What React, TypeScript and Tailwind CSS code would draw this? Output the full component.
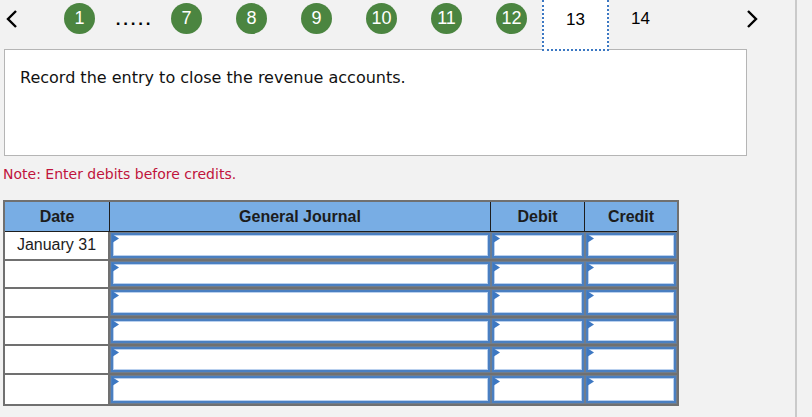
import React from "react";

function Chevron({ dir }: { dir: "left" | "right" }) {
  return (
    <svg width="14" height="20" viewBox="0 0 14 20" fill="none">
      {dir === "left" ? (
        <polyline points="11,2 3,10 11,18" stroke="#000" strokeWidth="2.4" strokeLinecap="butt" strokeLinejoin="miter" />
      ) : (
        <polyline points="3,2 11,10 3,18" stroke="#000" strokeWidth="2.4" strokeLinecap="butt" strokeLinejoin="miter" />
      )}
    </svg>
  );
}

function Circle({ n }: { n: number }) {
  return (
    <div className="w-[65px] h-[49px] flex justify-center pt-[3px]">
      <div className="w-[31px] h-[31px] rounded-full bg-[#4b8540] text-white flex items-center justify-center text-[18px] font-['Liberation_Sans',Arial,sans-serif]">
        {n}
      </div>
    </div>
  );
}

function InputCell() {
  return (
    <div className="relative h-full w-full p-[1px]">
      <div className="h-full w-full bg-white border-2 border-[#4a7fc1] shadow-[inset_0_0_0_1px_#b9d0ee]" />
      <svg className="absolute left-[2px] top-[2px]" width="7" height="9" viewBox="0 0 7 9">
        <polygon points="0,0 7,4.5 0,9" fill="#3d78c2" />
      </svg>
    </div>
  );
}

export default function App() {
  const rows = [0, 1, 2, 3, 4, 5];
  return (
    <div className="w-[812px] h-[417px] bg-[#f2f2f2] flex overflow-hidden font-['Liberation_Sans',Arial,sans-serif]">
      <div className="w-[795px] flex flex-col">
        {/* nav */}
        <div className="h-[49px] flex items-start relative z-10">
          <div className="w-[47px] h-[37px] flex items-center pl-[5px]">
            <Chevron dir="left" />
          </div>
          <Circle n={1} />
          <div className="w-[42px] h-[37px] flex items-center justify-center">
            <span className="text-[17px] font-bold tracking-[2.8px] text-black leading-none pt-[2px] pl-[3px]">.....</span>
          </div>
          {[7, 8, 9, 10, 11, 12].map((n) => (
            <Circle key={n} n={n} />
          ))}
          <div className="w-[67px] h-[51px] -ml-[2px] bg-white border-x-2 border-b-2 border-dotted border-[#3c78c3] flex justify-center pt-[7px] text-[17px] text-black">
            13
          </div>
          <div className="w-[63px] h-[37px] flex items-center justify-center text-[17px] text-black">14</div>
          <div className="flex-1 h-[37px] flex items-center pl-[73px]">
            <Chevron dir="right" />
          </div>
        </div>

        {/* question panel */}
        <div className="ml-[4px] w-[743px] h-[107px] bg-white border border-[#b5b5b5] pl-[15px] pt-[16px]">
          <p className="text-[16px] text-[#111] font-['DejaVu_Sans',Verdana,sans-serif]">
            Record the entry to close the revenue accounts.
          </p>
        </div>

        <p className="ml-[3px] mt-[8px] text-[14px] text-[#c0143c] font-['DejaVu_Sans',Verdana,sans-serif]">
          Note: Enter debits before credits.
        </p>

        {/* table */}
        <div className="ml-[3px] mt-[15px] w-[676px] border-2 border-[#707070] bg-white">
          <div className="grid grid-cols-[105px_381px_94px_1fr] h-[30px] bg-[#78ade4] border-b border-[#1e1e1e] text-[16px] font-bold text-[#1c1c1c]">
            <div className="flex items-center justify-center border-r border-[#1e1e1e]">Date</div>
            <div className="flex items-center justify-center border-r border-[#1e1e1e]">General Journal</div>
            <div className="flex items-center justify-center border-r border-[#1e1e1e]">Debit</div>
            <div className="flex items-center justify-center">Credit</div>
          </div>
          {rows.map((r) => (
            <div
              key={r}
              className={`grid grid-cols-[105px_381px_94px_1fr] h-[28.6px] ${r < 5 ? "border-b-2 border-[#707070]" : ""}`}
            >
              <div className="border-r-2 border-[#707070] flex items-center justify-center text-[16px] text-[#1c1c1c]">
                {r === 0 ? "January 31" : ""}
              </div>
              <div className="bg-[#6f7d8e]">
                <InputCell />
              </div>
              <div className="bg-[#6f7d8e]">
                <InputCell />
              </div>
              <div className="bg-[#6f7d8e]">
                <InputCell />
              </div>
            </div>
          ))}
        </div>
      </div>
      <div className="w-[2px] bg-[#cacaca]" />
    </div>
  );
}
